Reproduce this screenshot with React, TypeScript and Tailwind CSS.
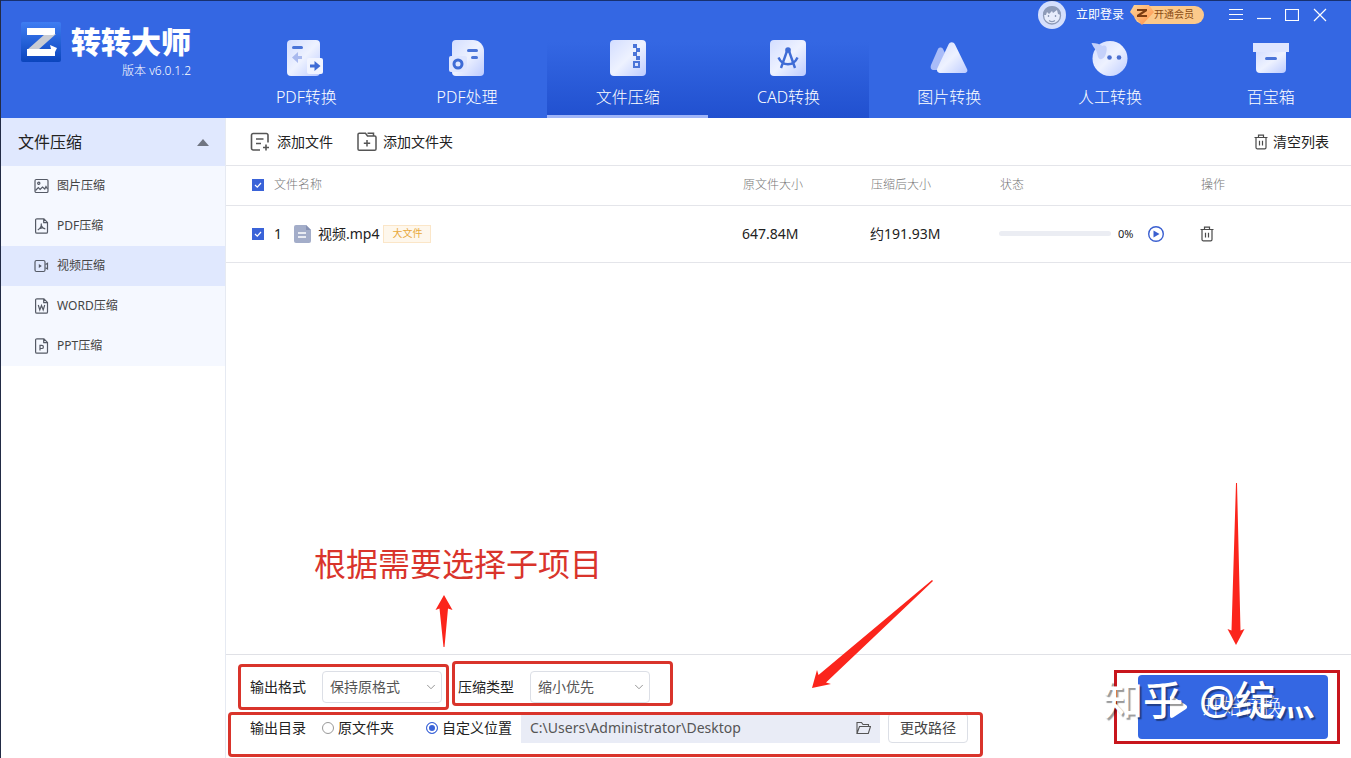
import { useState } from "react";
import type { ReactNode } from "react";
import { ChevronDown } from "lucide-react";
import clsx from "clsx";

const TrashIcon = () => (
  <svg width="14" height="16" viewBox="0 0 14 16" fill="none" stroke="#4a4a4a" strokeWidth="1.2">
    <path d="M0.5 3.5h13M4.5 3.2V1.2h5v2M2 3.8v9.7a1.3 1.3 0 0 0 1.3 1.3h7.4a1.3 1.3 0 0 0 1.3-1.3V3.8M5.5 6.8v4.6M8.5 6.8v4.6" />
  </svg>
);

const AddFileIcon = () => (
  <svg width="20" height="20" viewBox="0 0 20 20" fill="none" stroke="#555" strokeWidth="1.6">
    <path d="M18 10.5V3.2A1.7 1.7 0 0 0 16.3 1.5H3.2a1.7 1.7 0 0 0-1.7 1.7v13.1a1.7 1.7 0 0 0 1.7 1.7H10M6 7h7.5M6 11.5h5M16 12.5v6M13 15.5h6" />
  </svg>
);

const AddFolderIcon = () => (
  <svg width="20" height="20" viewBox="0 0 20 20" fill="none" stroke="#555" strokeWidth="1.5">
    <path d="M1 17V2.6A1.3 1.3 0 0 1 2.3 1.3h6.2l2 2.7h7.2A1.3 1.3 0 0 1 19 5.3V17a1.3 1.3 0 0 1-1.3 1.3H2.3A1.3 1.3 0 0 1 1 17zM10.5 1.3h6V4M10 8v6.4M6.8 11.2h6.4" />
  </svg>
);

const docOutline = "M2.9.8h7l3.6 3.6v9.500a1.300 1.300 0 0 1-1.300 1.300H2.900a1.300 1.300 0 0 1-1.300-1.300V2.100A1.300 1.300 0 0 1 2.900.8zM9.700 1v3.600h3.600";

const SideIcon = ({ children }: { children: ReactNode }) => (
  <svg width="15" height="16" viewBox="0 0 15 16" fill="none" stroke="#555a66" strokeWidth="1.2">
    {children}
  </svg>
);

const menu = [
  {
    label: "图片压缩",
    icon: (
      <SideIcon>
        <rect x="1" y="1.5" width="13" height="13" rx="1.3" />
        <circle cx="4.8" cy="5.2" r="1.1" />
        <path d="M1.5 12.5l2.800-2.800 1.800 1.800 2.400-2.500 2.300 2 1.200-2.500 1.500 2.500" />
      </SideIcon>
    ),
  },
  {
    label: "PDF压缩",
    icon: (
      <SideIcon>
        <path d={docOutline} />
        <path d="M7.2 5.5c.6 2.500-.8 4.800-3.400 6.500M7.300 7.500c.6 2 2 3 4 3.300M5.500 10.600c1.600-.8 3-.9 4.300-.6" />
      </SideIcon>
    ),
  },
  {
    label: "视频压缩",
    icon: (
      <SideIcon>
        <rect x="1" y="2.5" width="10" height="11" rx="1.5" />
        <path d="M11.5 6.5l2-1.200v5.600l-2-1.200" />
        <path d="M4.8 6v4l3-2z" fill="#555a66" stroke="none" />
      </SideIcon>
    ),
  },
  {
    label: "WORD压缩",
    icon: (
      <SideIcon>
        <path d={docOutline} />
        <path d="M4.3 7l1.500 5 1.700-4.500 1.700 4.500 1.500-5" />
      </SideIcon>
    ),
  },
  {
    label: "PPT压缩",
    icon: (
      <SideIcon>
        <path d={docOutline} />
        <path d="M6 12.5V7.300h1.800a1.600 1.600 0 0 1 0 3.200H6" />
      </SideIcon>
    ),
  },
];

const NavIcon = ({ children }: { children: ReactNode }) => (
  <svg width="38" height="38" viewBox="0 0 38 38" fill="none">
    {children}
  </svg>
);

const tabs = [
  {
    label: "PDF转换",
    icon: (
      <NavIcon>
        <rect x="0" y="1" width="33" height="36" rx="4" fill="url(#face)" />
        <rect x="5" y="7" width="11" height="3" rx="1.5" fill="#4a74d8" />
        <path d="M15 17h-4v-4l-6 5.500 6 5.500v-4h4z" fill="#a9b9ee" />
        <rect x="20" y="19" width="16" height="16" rx="2" fill="#f1f4ff" />
        <path d="M23 25.5h4.500V22l6 5-6 5v-3.500H23z" fill="#3f6cd6" />
      </NavIcon>
    ),
  },
  {
    label: "PDF处理",
    icon: (
      <NavIcon>
        <path d="M8 1h17a11 11 0 0 1 11 11v21a4 4 0 0 1-4 4H8a4 4 0 0 1-4-4V5a4 4 0 0 1 4-4z" fill="url(#face)" />
        <rect x="19" y="10" width="11" height="3" rx="1.5" fill="#4a74d8" />
        <rect x="23" y="17" width="7" height="3" rx="1.5" fill="#4a74d8" />
        <rect x="1" y="17" width="18" height="16" rx="2" fill="#dfe6ff" />
        <circle cx="10" cy="25" r="4" stroke="#3f6cd6" strokeWidth="3" />
      </NavIcon>
    ),
  },
  {
    label: "文件压缩",
    icon: (
      <NavIcon>
        <rect x="1" y="1" width="36" height="36" rx="4" fill="url(#face)" />
        <path d="M24 5h4v4h3v4h-3v4h3v4h-4v-4h-3v-4h3V9h-3z" fill="#4a74d8" />
        <rect x="25" y="23" width="5" height="5" stroke="#4a74d8" strokeWidth="2" />
      </NavIcon>
    ),
  },
  {
    label: "CAD转换",
    icon: (
      <NavIcon>
        <rect x="1" y="1" width="36" height="36" rx="4" fill="url(#face)" />
        <circle cx="19" cy="11" r="2.8" fill="#3f6cd6" />
        <path d="M18 12l-6 17M20 12l6 17M9.500 18.500c4 9 15 9 19 0" stroke="#3f6cd6" strokeWidth="2.4" />
      </NavIcon>
    ),
  },
  {
    label: "图片转换",
    icon: (
      <NavIcon>
        <path d="M8 10c1-2 4-2 5 0l2 4-7 17H4c-3 0-4-2-3-5z" fill="#a9bcf8" />
        <path d="M18.500 5.500c1.500-3 5-3 6.500 0L37 30c1 2 0 4-3 4H11c-3 0-5-2-3.500-5z" fill="url(#face)" />
      </NavIcon>
    ),
  },
  {
    label: "人工转换",
    icon: (
      <NavIcon>
        <circle cx="19" cy="19.5" r="17.5" fill="url(#face)" />
        <path d="M.5 4c5 0 8 1 11 3 5-2 5 4 3 9-2 5-7 6-8 0C6 11 3 10 .5 4z" fill="#c5d1fa" />
        <circle cx="18.5" cy="18.5" r="2.3" fill="#4a6fd0" />
        <circle cx="28" cy="18.5" r="2.3" fill="#4a6fd0" />
      </NavIcon>
    ),
  },
  {
    label: "百宝箱",
    icon: (
      <NavIcon>
        <path d="M4 12h30v18a4 4 0 0 1-4 4H8a4 4 0 0 1-4-4z" fill="url(#face)" />
        <path d="M1 4h36v9H1z" fill="#dfe6ff" />
        <rect x="13" y="18" width="12" height="3" rx="1.5" fill="#4a74d8" />
      </NavIcon>
    ),
  },
];

const windowButtons = [
  { name: "菜单", d: "M0 1.5h14M0 6.5h14M0 11.5h14" },
  { name: "最小化", d: "M0 10.5h14" },
  { name: "最大化", d: "M.5 1.5h13v11H.5z" },
  { name: "关闭", d: "M1 1l12 12M13 1L1 13" },
];

const CheckBox = ({ label }: { label: string }) => (
  <span className="relative inline-flex size-3 shrink-0">
    <input
      type="checkbox"
      defaultChecked
      aria-label={label}
      className="peer size-3 appearance-none border border-[#3a63d8] bg-white checked:bg-[#3a63d8]"
    />
    <svg className="pointer-events-none absolute inset-0 hidden peer-checked:block" width="12" height="12" viewBox="0 0 12 12" fill="none" stroke="#fff" strokeWidth="1.2">
      <path d="M3 6l2.300 2.200L9 4" />
    </svg>
  </span>
);

const SelectField = ({ id, label, options }: { id: string; label: string; options: string[] }) => (
  <div className="flex items-center gap-4">
    <label htmlFor={id}>{label}</label>
    <div className="relative">
      <select id={id} className="block h-8 w-30 appearance-none rounded-sm border border-[#dcdfe6] bg-white pl-[7px] text-[#555]">
        {options.map((o) => <option key={o}>{o}</option>)}
      </select>
      <ChevronDown size={14} strokeWidth={1.5} className="pointer-events-none absolute top-[9px] right-1 text-[#888]" />
    </div>
  </div>
);

const Radio = ({ label, checked, onChange }: { label: string; checked: boolean; onChange: () => void }) => (
  <label className="flex items-center gap-1">
    <input
      type="radio"
      name="output-dir"
      checked={checked}
      onChange={onChange}
      className="size-3 appearance-none rounded-full border border-[#999] bg-white checked:border-[#3a63d8] checked:bg-[#3a63d8] checked:shadow-[inset_0_0_0_2px_white]"
    />
    {label}
  </label>
);

function Header() {
  return (
    <header className="relative flex h-[118px] border-t border-[#17306f] bg-[#3467e3] text-white">
      <svg width="0" height="0" className="absolute">
        <defs>
          <linearGradient id="face" x1="0" y1="0" x2="1" y2="1">
            <stop offset="0" stopColor="#d3ddff" />
            <stop offset="0.5" stopColor="#eef2ff" />
            <stop offset="1" stopColor="#bccbff" />
          </linearGradient>
          <linearGradient id="logo" x1="0" y1="0" x2="0" y2="1">
            <stop offset="0" stopColor="#3f7df2" />
            <stop offset="1" stopColor="#0b45bd" />
          </linearGradient>
          <linearGradient id="gem" x1="0" y1="0" x2="1" y2="1">
            <stop offset="0" stopColor="#ffd79a" />
            <stop offset="1" stopColor="#ff8d45" />
          </linearGradient>
        </defs>
      </svg>

      {/* Brand */}
      <div className="flex w-[225px] shrink-0 items-start gap-[10px] pt-[21px] pl-5">
        <svg width="40" height="40" viewBox="0 0 40 40">
          <rect width="40" height="40" rx="2" fill="url(#logo)" />
          <path d="M24 12h11L17 28H6z" fill="#c9ccd3" />
          <path d="M6 6h28v6l-2 1H6zM6 27h24l-1-4 7 3-2 4v4H6z" fill="#fff" />
        </svg>
        <div className="text-right">
          <div className="text-[30px] leading-10 font-black">转转大师</div>
          <div className="text-xs leading-[18px] font-light">版本 v6.0.1.2</div>
        </div>
      </div>

      <nav className="grid flex-1 grid-cols-7">
        {tabs.map((tab, i) => (
          <a
            key={tab.label}
            href="#"
            className={clsx(
              "flex flex-col items-center gap-2 border-b-3 pt-[38px] text-base leading-6 font-light",
              i === 2 ? "border-[#9fb5f8]" : "border-transparent",
              (i === 2 || i === 3) && "bg-linear-to-b from-[#3467e3] from-35% to-[#2150cf] bg-origin-border"
            )}
          >
            {tab.icon}
            {tab.label}
          </a>
        ))}
      </nav>

      {/* Account and window controls */}
      <div className="absolute top-0 right-[24px] flex h-7 items-center text-xs">
        <svg width="28" height="28" viewBox="0 0 28 28" fill="none">
          <circle cx="14" cy="14" r="14" fill="#d5dffc" />
          <circle cx="14" cy="14.5" r="8.5" fill="#e8edfc" stroke="#8e9bb8" strokeWidth="1.3" />
          <path d="M5 14C5 2 23 2 23 14l-3-1-1-4-4 3-1-2-3 3-2-2-1 3z" fill="#8e9bb8" />
          <path d="M10.500 14v2M17.500 14v2M11 19.500c2 1.500 4 1.500 6 0" stroke="#8e9bb8" strokeWidth="1.3" />
        </svg>
        <a href="#" className="ml-[10px]">立即登录</a>
        <button className="ml-[10px] flex h-[18px] items-center rounded-full bg-[#fbc98b] pr-[10px] text-[#8a4b14]">
          <svg width="24" height="20" viewBox="0 0 24 20" className="-ml-1">
            <path d="M4 0h15l5 7-12 13L0 7z" fill="url(#gem)" />
            <path d="M7 4h10v2l-6 4h6v2H7v-2l6-4H7z" fill="#7c3c12" />
          </svg>
          <span className="text-[10px]">开通会员</span>
        </button>
        <div className="ml-[25px] flex items-center gap-[14px]">
          {windowButtons.map((b) => (
            <button key={b.name} aria-label={b.name}>
              <svg width="14" height="14" viewBox="0 0 14 14" fill="none" stroke="#fff" strokeWidth="1.2">
                <path d={b.d} />
              </svg>
            </button>
          ))}
        </div>
      </div>
    </header>
  );
}

function FileTable() {
  return (
    <table className="w-full table-fixed text-left">
      <colgroup>
        <col />
        <col className="w-32" />
        <col className="w-[129px]" />
        <col className="w-[201px]" />
        <col className="w-[151px]" />
      </colgroup>
      <thead>
        <tr className="h-[39px] border-b border-[#e4e5ea] text-xs text-[#777]">
          <th className="font-light">
            <div className="flex items-center gap-[10px] pl-[26px]">
              <CheckBox label="全选" />
              文件名称
            </div>
          </th>
          <th className="pl-px font-light">原文件大小</th>
          <th className="pl-px font-light">压缩后大小</th>
          <th className="pl-px font-light">状态</th>
          <th className="pl-px font-light">操作</th>
        </tr>
      </thead>
      <tbody>
        <tr className="h-[57px] border-b border-[#e4e5ea] text-sm text-[#222]">
          <td>
            <div className="flex items-center pl-[26px]">
              <CheckBox label="视频.mp4" />
              <span className="ml-[10px]">1</span>
              <svg width="17" height="18" viewBox="0 0 17 18" className="ml-3">
                <path d="M2 0h10l5 5v11a2 2 0 0 1-2 2H2a2 2 0 0 1-2-2V2a2 2 0 0 1 2-2z" fill="#a3adc9" />
                <path d="M12 0l5 5h-5z" fill="#8792b4" />
                <path d="M4 8h8M4 12h8" stroke="#fff" strokeWidth="1.6" />
              </svg>
              <span className="ml-[7px]">视频.mp4</span>
              <span className="ml-1 flex h-[18px] w-12 items-center justify-center border border-[#fbe6c8] bg-[#fef7ec] text-[10px] text-[#e8a93c]">大文件</span>
            </div>
          </td>
          <td>647.84M</td>
          <td>约191.93M</td>
          <td>
            <div className="flex items-center">
              <div className="h-[5px] w-28 rounded-full bg-[#ebedf3]" role="progressbar" aria-valuenow={0} />
              <span className="ml-[7px] w-[30px] text-[11px]">0%</span>
              <button aria-label="开始">
                <svg width="16" height="16" viewBox="0 0 16 16" fill="none">
                  <circle cx="8" cy="8" r="7.3" stroke="#3a5fd0" strokeWidth="1.4" />
                  <path d="M5.5 4.500v7l6-3.500z" fill="#3a5fd0" />
                </svg>
              </button>
            </div>
          </td>
          <td>
            <button aria-label="删除" className="block"><TrashIcon /></button>
          </td>
        </tr>
      </tbody>
    </table>
  );
}

function Footer() {
  const [custom, setCustom] = useState(true);
  const [path, setPath] = useState("C:\\Users\\Administrator\\Desktop");

  return (
    <footer className="relative flex h-[104px] items-start justify-between border-t border-[#e0e1e6] pr-[23px] pl-6 text-sm text-[#222]">
      <div className="flex flex-col gap-[10px] pt-4">
        <div className="flex gap-4">
          <SelectField id="format" label="输出格式" options={["保持原格式", "MP4", "AVI"]} />
          <SelectField id="mode" label="压缩类型" options={["缩小优先", "清晰优先"]} />
        </div>
        <div className="flex h-[30px] items-center">
          <span className="mr-4">输出目录</span>
          <Radio label="原文件夹" checked={!custom} onChange={() => setCustom(false)} />
          <div className="w-8" />
          <Radio label="自定义位置" checked={custom} onChange={() => setCustom(true)} />
          <div className="ml-[9px] flex h-[30px] w-[359px] items-center bg-[#e9ecf6] px-[9px]">
            <input
              value={path}
              onChange={(e) => setPath(e.target.value)}
              aria-label="输出目录"
              className="min-w-0 flex-1 text-[#555] outline-none"
            />
            <svg width="15" height="14" viewBox="0 0 15 14" fill="none" stroke="#555" strokeWidth="1.1">
              <path d="M1 12.5V1.500h4.500l1.500 2h5.500v2M1 12.500L3.500 5.500h11L12.300 12.500z" />
            </svg>
          </div>
          <button className="ml-2 h-[30px] w-20 rounded-sm border border-[#dcdfe6] text-[#444]">更改路径</button>
        </div>
      </div>
      <button className="mt-5 flex h-16 w-[190px] items-center gap-[14px] rounded-sm bg-[#3467e3] pl-8 text-xl font-light text-white">
        <svg width="18" height="22" viewBox="0 0 18 22" fill="#fff">
          <path d="M0 2C0 0 1.500-.5 3 .5L16 9c1.500 1 1.500 3 0 4L3 21.500c-1.500 1-3 .5-3-1.500z" />
        </svg>
        开始转换
      </button>

      {/* Red callout frames */}
      <div className="pointer-events-none absolute top-[9px] left-3 h-[46px] w-[211px] rounded-sm border-3 border-[#d9342b]" />
      <div className="pointer-events-none absolute top-[6px] left-[226px] h-[45px] w-[221px] rounded-sm border-3 border-[#d9342b]" />
      <div className="pointer-events-none absolute top-[57px] left-[2px] h-[45px] w-[755px] rounded-sm border-3 border-[#d9342b]" />
      <div className="pointer-events-none absolute top-[15px] right-[11px] h-[74px] w-[226px] border-3 border-[#c8161d]" />
      <div className="pointer-events-none absolute top-[17px] right-[36px] flex gap-4 text-[40px] leading-[56px] font-medium whitespace-nowrap text-white [text-shadow:2px_2px_1px_rgba(0,0,0,0.4)]">
        <span>知乎</span>
        <span>@绽灬</span>
      </div>
    </footer>
  );
}

export default function App() {
  const [active, setActive] = useState("视频压缩");

  return (
    <div className="flex min-h-screen flex-col border-l border-[#222b45] bg-white font-[family-name:'Noto_Sans','Noto_Sans_CJK_SC',sans-serif]">
      <Header />
      <div className="flex flex-1">
        <aside className="w-[225px] shrink-0 border-r border-[#e6eaf2]">
          <button className="flex h-12 w-full items-center justify-between bg-[#e0e8fe] pr-4 pl-[17px] text-base text-[#222]">
            文件压缩
            <svg width="12" height="7" viewBox="0 0 12 7" fill="#707581"><path d="M6 0l6 7H0z" /></svg>
          </button>
          {menu.map((item) => (
            <button
              key={item.label}
              onClick={() => setActive(item.label)}
              className={clsx(
                "flex h-10 w-full items-center gap-2 pl-[33px] text-xs text-[#444]",
                item.label === active ? "bg-[#e0e8fe]" : "bg-[#f5f8ff]"
              )}
            >
              {item.icon}
              {item.label}
            </button>
          ))}
        </aside>

        <main className="relative flex min-w-0 flex-1 flex-col">
          <div className="flex h-12 items-center border-b border-[#e4e5ea] pr-[22px] pl-6 text-sm text-[#222]">
            <button className="flex items-center gap-[7px]"><AddFileIcon />添加文件</button>
            <button className="ml-6 flex items-center gap-[6px]"><AddFolderIcon />添加文件夹</button>
            <button className="ml-auto flex items-center gap-[5px]"><TrashIcon />清空列表</button>
          </div>
          <FileTable />
          <div className="flex-1" />
          <Footer />

          {/* Hand-drawn notes over the list */}
          <p className="pointer-events-none absolute bottom-[170px] left-[88px] text-[32px] leading-12 text-[#d9342b]">根据需要选择子项目</p>
          <svg className="pointer-events-none absolute bottom-[111px] left-[209px]" width="18" height="52" viewBox="0 0 18 52" fill="#fb251c">
            <path d="M9 0l8.500 15-4.500-1.500L9.500 52h-1L4.500 13.500.5 15z" />
          </svg>
          <svg className="pointer-events-none absolute bottom-[69px] left-[586px]" width="122" height="110" viewBox="0 0 122 110" fill="#fb251c">
            <path d="M0 109l5-18 1.500 5L120 1l1 1L14 103.500l5 1.500z" />
          </svg>
          <svg className="pointer-events-none absolute right-[106px] bottom-[113px]" width="18" height="162" viewBox="0 0 18 162" fill="#fb251c">
            <path d="M9 162L.5 146l4 1.500L9 0h1l3.500 147.500 4-1.500z" />
          </svg>
        </main>
      </div>
    </div>
  );
}
